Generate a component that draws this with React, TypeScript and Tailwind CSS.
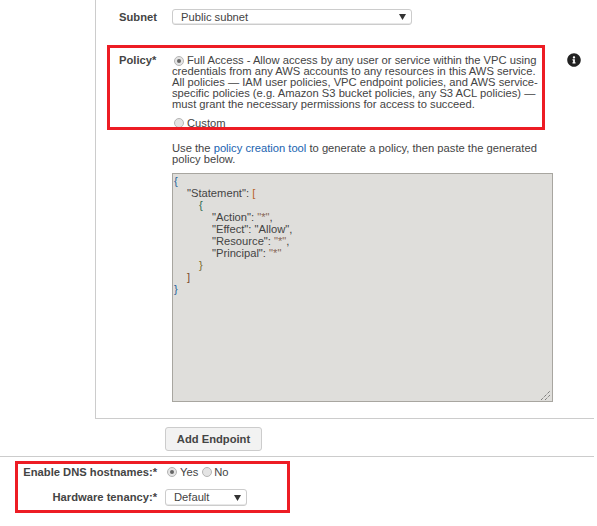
import React from "react"
import { FaInfoCircle } from "react-icons/fa"

const Radio = ({ checked = false }: { checked?: boolean }) => (
  <span className="flex h-[10px] w-[10px] flex-shrink-0 items-center justify-center rounded-full border border-[#b5b5b5] bg-[#e4e4e4]">
    {checked && <span className="h-[4px] w-[4px] rounded-full bg-[#666]" />}
  </span>
)

const Select = ({ label, className }: { label: string; className: string }) => (
  <div
    className={`flex items-center justify-between rounded-[3px] border border-[#ccc] bg-white pl-[8px] pr-[5px] shadow-[inset_0_-1px_0_#e8e8e8] ${className}`}
  >
    <span>{label}</span>
    <svg width="7" height="6" viewBox="0 0 7 6">
      <path d="M0 0h7L3.5 6z" fill="#333" />
    </svg>
  </div>
)

const policyLines = [
  "credentials from any AWS accounts to any resources in this AWS service.",
  "All policies — IAM user policies, VPC endpoint policies, and AWS service-",
  "specific policies (e.g. Amazon S3 bucket policies, any S3 ACL policies) —",
  "must grant the necessary permissions for access to succeed.",
]

const jsonLines: { indent: string; text: React.ReactNode }[] = [
  { indent: "pl-0", text: <span className="text-[#1f5f99]">{"{"}</span> },
  {
    indent: "pl-[13px]",
    text: (
      <>
        "Statement": <span className="text-[#b8632a]">[</span>
      </>
    ),
  },
  { indent: "pl-[25px]", text: <span className="text-[#2f6a4f]">{"{"}</span> },
  {
    indent: "pl-[38px]",
    text: (
      <>
        "Action": <span className="text-[#8a6a5a]">"*"</span>,
      </>
    ),
  },
  { indent: "pl-[38px]", text: <>"Effect": "Allow",</> },
  {
    indent: "pl-[38px]",
    text: (
      <>
        "Resource": <span className="text-[#8a6a5a]">"*"</span>,
      </>
    ),
  },
  {
    indent: "pl-[38px]",
    text: (
      <>
        "Principal": <span className="text-[#8a6a5a]">"*"</span>
      </>
    ),
  },
  { indent: "pl-[25px]", text: <span className="text-[#7a6a2a]">{"}"}</span> },
  { indent: "pl-[13px]", text: <span className="text-[#7a4a2a]">]</span> },
  { indent: "pl-0", text: <span className="text-[#1f5f99]">{"}"}</span> },
]

const Resizer = () => (
  <svg width="10" height="10" viewBox="0 0 10 10" className="absolute bottom-[1px] right-[1px]">
    <path d="M0 10L9 1M4 10L9 5" stroke="#555" strokeWidth="1" strokeDasharray="1 1" fill="none" />
  </svg>
)

const EndpointPanel = () => (
  <div className="ml-[95px] h-[419px] w-[499px] border-b border-l border-[#ccc] pl-[23px] pt-[9px]">
    <div className="flex h-[16px] items-center">
      <div className="w-[53px] font-bold">Subnet</div>
      <Select label="Public subnet" className="h-[16px] w-[240px]" />
    </div>

    <div className="relative mt-[27px] flex">
      <div className="w-[53px] pt-[1px] font-bold leading-[14px]">Policy*</div>
      <div className="w-[373px] whitespace-nowrap">
        <div className="flex items-center pt-[3px] leading-[11px]">
          <span className="ml-[2px] mr-[3px]">
            <Radio checked />
          </span>
          Full Access - Allow access by any user or service within the VPC using
        </div>
        {policyLines.map((line) => (
          <div key={line} className="leading-[11px]">
            {line}
          </div>
        ))}
        <div className="mt-[6px] flex items-center gap-[3px] pl-[2px] leading-[14px]">
          <Radio />
          <span>Custom</span>
        </div>
        <p className="mt-[13px] leading-[11px]">
          Use the <span className="text-[#1a63b0]">policy creation tool</span> to generate a policy, then paste
          the generated
          <br />
          policy below.
        </p>
      </div>
      <FaInfoCircle className="absolute left-[448px] top-[1px] h-[14px] w-[14px] text-[#222]" />
    </div>

    <div className="relative ml-[53px] mt-[8px] h-[229px] w-[381px] border border-[#a8a6a0] bg-[#dfdedb] pl-[1px] pt-[1px] leading-[12px]">
      {jsonLines.map((line, i) => (
        <div key={i} className={line.indent}>
          {line.text}
        </div>
      ))}
      <Resizer />
    </div>
  </div>
)

const BottomForm = () => (
  <>
    <div className="ml-[165px] mt-[8px]">
      <button className="h-[24px] w-[97px] rounded-[3px] border border-[#ccc] bg-[#f2f2f2] font-bold">
        Add Endpoint
      </button>
    </div>
    <div className="mt-[5px] w-[594px] border-t border-[#ccc]" />
    <div className="mt-[8px] flex h-[14px] items-center whitespace-nowrap">
      <div className="w-[157px] text-right font-bold">Enable DNS hostnames:*</div>
      <div className="ml-[10px] flex items-center">
        <Radio checked />
        <span className="ml-[3px]">Yes</span>
        <span className="ml-[4px]">
          <Radio />
        </span>
        <span className="ml-[2px]">No</span>
      </div>
    </div>
    <div className="mt-[10px] flex h-[17px] items-center whitespace-nowrap">
      <div className="w-[157px] text-right font-bold">Hardware tenancy:*</div>
      <Select label="Default" className="ml-[8px] h-[17px] w-[82px]" />
    </div>
  </>
)

const App = () => {
  return (
    <div className="relative h-[526px] w-[597px] overflow-hidden bg-white font-['Liberation_Sans',Arial,sans-serif] text-[11.2px] text-[#444]">
      <EndpointPanel />
      <BottomForm />
      <div className="absolute left-[107px] top-[45px] h-[85px] w-[438px] border-[3px] border-[#ed1c24]" />
      <div className="absolute left-[15px] top-[461px] h-[52px] w-[275px] border-[3px] border-[#ed1c24]" />
    </div>
  )
}

export default App
